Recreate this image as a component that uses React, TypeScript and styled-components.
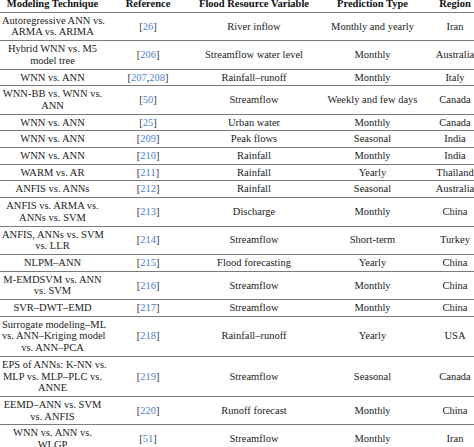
import * as React from 'react';
import styled, { createGlobalStyle } from 'styled-components';

interface IRow {
  technique: string[];
  refs: string[];
  variable: string;
  prediction: string;
  region: string;
}

const rows: IRow[] = [
  { technique: ['Autoregressive ANN vs.', 'ARMA vs. ARIMA'], refs: ['26'], variable: 'River inflow', prediction: 'Monthly and yearly', region: 'Iran' },
  { technique: ['Hybrid WNN vs. M5', 'model tree'], refs: ['206'], variable: 'Streamflow water level', prediction: 'Monthly', region: 'Australia' },
  { technique: ['WNN vs. ANN'], refs: ['207', '208'], variable: 'Rainfall–runoff', prediction: 'Monthly', region: 'Italy' },
  { technique: ['WNN-BB vs. WNN vs.', 'ANN'], refs: ['50'], variable: 'Streamflow', prediction: 'Weekly and few days', region: 'Canada' },
  { technique: ['WNN vs. ANN'], refs: ['25'], variable: 'Urban water', prediction: 'Monthly', region: 'Canada' },
  { technique: ['WNN vs. ANN'], refs: ['209'], variable: 'Peak flows', prediction: 'Seasonal', region: 'India' },
  { technique: ['WNN vs. ANN'], refs: ['210'], variable: 'Rainfall', prediction: 'Monthly', region: 'India' },
  { technique: ['WARM vs. AR'], refs: ['211'], variable: 'Rainfall', prediction: 'Yearly', region: 'Thailand' },
  { technique: ['ANFIS vs. ANNs'], refs: ['212'], variable: 'Rainfall', prediction: 'Seasonal', region: 'Australia' },
  { technique: ['ANFIS vs. ARMA vs.', 'ANNs vs. SVM'], refs: ['213'], variable: 'Discharge', prediction: 'Monthly', region: 'China' },
  { technique: ['ANFIS, ANNs vs. SVM', 'vs. LLR'], refs: ['214'], variable: 'Streamflow', prediction: 'Short-term', region: 'Turkey' },
  { technique: ['NLPM–ANN'], refs: ['215'], variable: 'Flood forecasting', prediction: 'Yearly', region: 'China' },
  { technique: ['M-EMDSVM vs. ANN', 'vs. SVM'], refs: ['216'], variable: 'Streamflow', prediction: 'Monthly', region: 'China' },
  { technique: ['SVR–DWT–EMD'], refs: ['217'], variable: 'Streamflow', prediction: 'Monthly', region: 'China' },
  { technique: ['Surrogate modeling–ML', 'vs. ANN–Kriging model', 'vs. ANN–PCA'], refs: ['218'], variable: 'Rainfall–runoff', prediction: 'Yearly', region: 'USA' },
  { technique: ['EPS of ANNs: K-NN vs.', 'MLP vs. MLP–PLC vs.', 'ANNE'], refs: ['219'], variable: 'Streamflow', prediction: 'Seasonal', region: 'Canada' },
  { technique: ['EEMD–ANN vs. SVM', 'vs. ANFIS'], refs: ['220'], variable: 'Runoff forecast', prediction: 'Monthly', region: 'China' },
  { technique: ['WNN vs. ANN vs.', 'WLGP'], refs: ['51'], variable: 'Streamflow', prediction: 'Monthly', region: 'Iran' },
];

const widths = [105, 86, 126, 111, 54];

const GlobalStyle = createGlobalStyle`
  html, body {
    margin: 0;
    padding: 0;
    background: #fff;
    overflow: hidden;
  }
`;

const Table = styled.table`
  border-collapse: collapse;
  table-layout: fixed;
  width: ${widths.reduce((a, b) => a + b, 0)}px;
  margin-top: -3px;
  font-family: 'Liberation Serif', 'Times New Roman', serif;
  font-size: 10.5px;
  line-height: 11.7px;
  color: #222;
`;

const HeadCell = styled.th`
  font-weight: 700;
  color: #111;
  text-align: center;
  white-space: nowrap;
  padding: 1px 2px 2px;
  border-bottom: 1px solid #7c7c7c;
`;

const Cell = styled.td`
  text-align: center;
  vertical-align: middle;
  white-space: nowrap;
  padding: 2px 2px;
  border-bottom: 1px solid #7c7c7c;
`;

const Ref = styled.a`
  color: #4b7fd4;
  text-decoration: none;
`;

const Bracket = styled.span`
  color: #333;
`;

const References: React.FC<{ refs: string[] }> = ({ refs }) => (
  <>
    <Bracket>[</Bracket>
    {refs.map((r, i) => (
      <React.Fragment key={r}>
        {i > 0 && <Bracket>,</Bracket>}
        <Ref href={`#ref-${r}`}>{r}</Ref>
      </React.Fragment>
    ))}
    <Bracket>]</Bracket>
  </>
);

const App: React.FC = () => (
  <>
    <GlobalStyle />
    <Table>
      <colgroup>
        {widths.map((w, i) => <col key={i} style={{ width: w }} />)}
      </colgroup>
      <thead>
        <tr>
          <HeadCell>Modeling Technique</HeadCell>
          <HeadCell>Reference</HeadCell>
          <HeadCell>Flood Resource Variable</HeadCell>
          <HeadCell>Prediction Type</HeadCell>
          <HeadCell>Region</HeadCell>
        </tr>
      </thead>
      <tbody>
        {rows.map((row, i) => (
          <tr key={i}>
            <Cell>
              {row.technique.map((line, j) => (
                <React.Fragment key={j}>
                  {j > 0 && <br />}
                  {line}
                </React.Fragment>
              ))}
            </Cell>
            <Cell><References refs={row.refs} /></Cell>
            <Cell>{row.variable}</Cell>
            <Cell>{row.prediction}</Cell>
            <Cell>{row.region}</Cell>
          </tr>
        ))}
      </tbody>
    </Table>
  </>
);

export default App;
